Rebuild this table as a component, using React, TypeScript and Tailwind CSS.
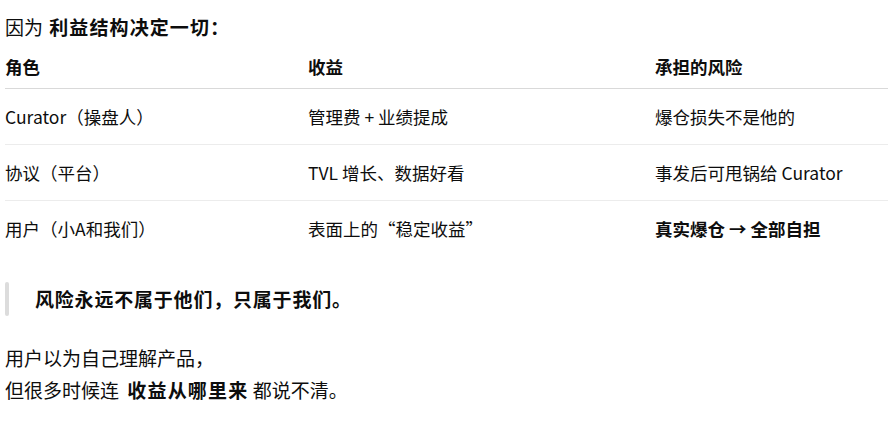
const rows = [
  { role: 'Curator（操盘人）', gain: '管理费 + 业绩提成', risk: '爆仓损失不是他的', bold: false },
  { role: '协议（平台）', gain: 'TVL 增长、数据好看', risk: '事发后可甩锅给 Curator', bold: false },
  { role: '用户（小A和我们）', gain: '表面上的“稳定收益”', risk: '真实爆仓 → 全部自担', bold: true },
];

export default function App() {
  return (
    <div
      className="w-[888px] h-[437px] overflow-hidden bg-white pl-[5px] pt-[11px] text-[#0d0d0d]"
      style={{ fontFamily: '"Noto Sans CJK SC", "Noto Sans", sans-serif' }}
    >
      <p className="text-[19px] leading-[32px]">
        因为 <strong className="ml-[2px] font-bold tracking-[1.1px]">利益结构决定一切：</strong>
      </p>

      <table className="mt-[10px] w-[883px] border-collapse text-left text-[17.5px]">
        <thead>
          <tr className="border-b border-[#d9d9d9]">
            <th className="w-[303px] pb-[7px] font-bold leading-[28px]">角色</th>
            <th className="w-[347px] pb-[7px] font-bold leading-[28px]">收益</th>
            <th className="pb-[7px] font-bold leading-[28px]">承担的风险</th>
          </tr>
        </thead>
        <tbody>
          {rows.map((r, i) => (
            <tr key={r.role} className={i < rows.length - 1 ? 'border-b border-[#ececec]' : ''}>
              <td className="h-[56px] leading-[28px]">{r.role}</td>
              <td className="h-[56px] leading-[28px]">{r.gain}</td>
              <td className={`h-[56px] leading-[28px] ${r.bold ? 'font-bold' : ''}`}>{r.risk}</td>
            </tr>
          ))}
        </tbody>
      </table>

      <blockquote className="mt-[25px] flex items-center">
        <span className="h-[34px] w-[4px] rounded-full bg-[#dcdcdc]" />
        <p className="pl-[26px] text-[19px] font-bold leading-[32px] tracking-[0.8px]">
          风险永远不属于他们，只属于我们。
        </p>
      </blockquote>

      <div className="mt-[26px] text-[19px] leading-[32px]">
        <p>用户以为自己理解产品，</p>
        <p>
          但很多时候连 <strong className="ml-[4px] font-bold tracking-[1.2px]">收益从哪里来</strong> 都说不清。
        </p>
      </div>
    </div>
  );
}
